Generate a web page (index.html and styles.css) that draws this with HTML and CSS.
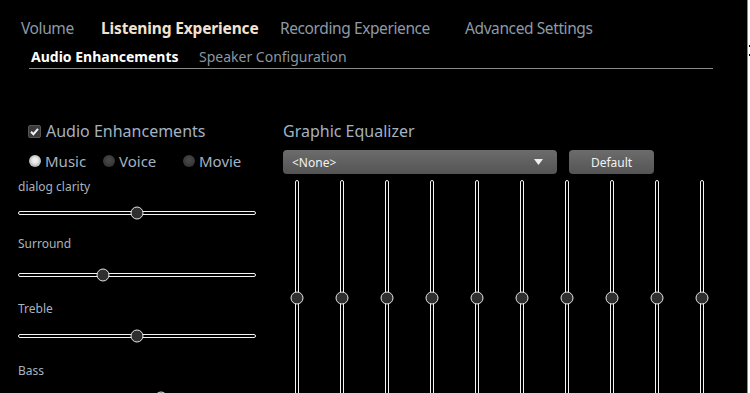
FILE: index.html
```html
<!DOCTYPE html>
<html lang="en">
<head>
    <meta charset="UTF-8">
    <meta name="viewport" content="width=device-width, initial-scale=1.0">
    <title>Listening Experience</title>
    <link rel="stylesheet" href="styles.css">
</head>
<body>
<div class="app">
    <div class="window">
        <nav class="tabs">
            <span class="tab tab-volume">Volume</span>
            <span class="tab tab-listening active">Listening Experience</span>
            <span class="tab tab-recording">Recording Experience</span>
            <span class="tab">Advanced Settings</span>
        </nav>

        <div class="subtabs">
            <span class="subtab active">Audio Enhancements</span>
            <span class="subtab">Speaker Configuration</span>
        </div>

        <main class="panel">
            <section class="enhance">
                <label class="check">
                    <span class="box">
                        <svg width="11" height="11" viewBox="0 0 11 11"><path d="M2 5.8 L4.4 8.2 L9 2.8" fill="none" stroke="#f2f2f2" stroke-width="2"/></svg>
                    </span>
                    Audio Enhancements
                </label>

                <div class="modes">
                    <label class="mode mode-music"><span class="radio selected"></span>Music</label>
                    <label class="mode mode-voice"><span class="radio"></span>Voice</label>
                    <label class="mode"><span class="radio"></span>Movie</label>
                </div>

                <div class="field field-dialog">
                    <div class="field-label">dialog clarity</div>
                    <div class="hslider"><span class="thumb" style="left: 50%"></span></div>
                </div>
                <div class="field field-surround">
                    <div class="field-label">Surround</div>
                    <div class="hslider"><span class="thumb" style="left: 35.7%"></span></div>
                </div>
                <div class="field field-treble">
                    <div class="field-label">Treble</div>
                    <div class="hslider"><span class="thumb" style="left: 50%"></span></div>
                </div>
                <div class="field field-bass">
                    <div class="field-label">Bass</div>
                    <div class="hslider"><span class="thumb" style="left: 60%"></span></div>
                </div>
            </section>

            <section class="eq">
                <h3>Graphic Equalizer</h3>
                <div class="eq-controls">
                    <div class="preset">
                        <span>&lt;None&gt;</span>
                        <svg width="9" height="6" viewBox="0 0 9 6"><path d="M0 0 H9 L4.5 6 Z" fill="#f0f0f0"/></svg>
                    </div>
                    <button class="btn-default">Default</button>
                </div>
                <div class="bands">
                    <div class="vslider"><span class="thumb" style="top: 50%"></span></div>
                    <div class="vslider"><span class="thumb" style="top: 50%"></span></div>
                    <div class="vslider"><span class="thumb" style="top: 50%"></span></div>
                    <div class="vslider"><span class="thumb" style="top: 50%"></span></div>
                    <div class="vslider"><span class="thumb" style="top: 50%"></span></div>
                    <div class="vslider"><span class="thumb" style="top: 50%"></span></div>
                    <div class="vslider"><span class="thumb" style="top: 50%"></span></div>
                    <div class="vslider"><span class="thumb" style="top: 50%"></span></div>
                    <div class="vslider"><span class="thumb" style="top: 50%"></span></div>
                    <div class="vslider"><span class="thumb" style="top: 50%"></span></div>
                </div>
            </section>
        </main>
    </div>
    <div class="edge"><span class="dots"></span></div>
</div>
</body>
</html>
```

FILE: styles.css
```css
body {
    margin: 0;
    padding: 0;
    background: #000;
    font-family: 'Noto Sans', 'Open Sans', sans-serif;
    overflow: hidden;
}

.app {
    display: flex;
    height: 393px;
}

.window {
    flex: 1;
    background: #000;
    overflow: hidden;
}

.edge {
    width: 2px;
    background: #fff;
    border-left: 1px solid #8c8c8c;
    padding-top: 45px;
}

.dots {
    display: block;
    width: 2px;
    height: 11px;
    margin-left: 1px;
    border-top: 2px solid #000;
    border-bottom: 2px solid #000;
    box-sizing: border-box;
}

/* top tabs */
.tabs {
    display: flex;
    padding: 17px 0 0 21px;
    font-size: 15.5px;
    line-height: 22px;
    letter-spacing: -0.4px;
}

.tab {
    color: #8d9aa7;
}

.tab-volume {
    width: 80px;
}

.tab-listening {
    width: 179px;
}

.tab-recording {
    width: 185px;
}

.tab.active {
    color: #f4e2cf;
    font-weight: bold;
    letter-spacing: -0.15px;
}

/* sub tabs */
.subtabs {
    display: flex;
    margin: 9px 0 0 29px;
    width: 682px;
    padding: 0 0 2px 2px;
    border-bottom: 1px solid #8a8a8a;
    font-size: 14px;
    line-height: 18px;
}

.subtab {
    color: #8c96a1;
    width: 168px;
}

.subtab.active {
    color: #fff;
    font-weight: bold;
}

/* panel */
.panel {
    display: flex;
    padding-top: 51px;
}

.enhance {
    width: 238px;
    padding-left: 18px;
}

.check {
    display: flex;
    align-items: center;
    margin-left: 10px;
    font-size: 16px;
    line-height: 22px;
    color: #a4b2c0;
}

.box {
    width: 13px;
    height: 13px;
    margin-right: 5px;
    border: 1px solid #555;
    border-radius: 2px;
    background: #3a3a3a;
    box-sizing: border-box;
    display: flex;
    align-items: center;
    justify-content: center;
}

.modes {
    display: flex;
    margin: 9px 0 0 11px;
    font-size: 15px;
    line-height: 20px;
    color: #a4b2c0;
}

.mode {
    display: flex;
    align-items: center;
}

.mode-music {
    width: 74px;
}

.mode-voice {
    width: 80px;
}

.radio {
    width: 12px;
    height: 12px;
    margin-right: 4px;
    border-radius: 50%;
    background: radial-gradient(circle at 50% 40%, #4a4a4a, #2c2c2c);
}

.radio.selected {
    background: radial-gradient(circle at 50% 45%, #eeeeee 25%, #8a8a8a);
}

.field-label {
    font-size: 12px;
    line-height: 16px;
    color: #a9b3bd;
}

.hslider {
    position: relative;
    height: 4px;
    margin: 0;
    border: 1px solid #f2f2f2;
    border-radius: 3px;
    box-sizing: border-box;
}

.hslider .thumb,
.vslider .thumb {
    position: absolute;
    width: 13px;
    height: 13px;
    border: 1.5px solid #e6e6e6;
    border-radius: 50%;
    background: #2f2f2f;
    box-sizing: border-box;
    transform: translate(-50%, -50%);
}

.hslider .thumb {
    top: 50%;
}

.field-dialog {
    margin-top: 8px;
}

.field-dialog .field-label {
    margin-bottom: 16px;
}

.field-surround {
    margin-top: 21px;
}

.field-surround .field-label {
    margin-bottom: 21px;
}

.field-treble {
    margin-top: 24px;
}

.field-treble .field-label {
    margin-bottom: 17px;
}

.field-bass {
    margin-top: 25px;
}

.field-bass .field-label {
    margin-bottom: 17px;
}

/* equalizer */
.eq {
    margin-left: 27px;
}

.eq h3 {
    margin: 0;
    font-size: 16px;
    line-height: 22px;
    font-weight: normal;
    color: #a4b2c0;
}

.eq-controls {
    display: flex;
    gap: 12px;
    margin-top: 8px;
}

.preset {
    width: 274px;
    height: 24px;
    display: flex;
    align-items: center;
    justify-content: space-between;
    padding: 0 14px 0 9px;
    box-sizing: border-box;
    border-radius: 4px;
    background: linear-gradient(#6c6c6c, #545454);
    color: #f2f2f2;
    font-size: 12px;
}

.btn-default {
    width: 85px;
    height: 24px;
    border: none;
    border-radius: 4px;
    background: linear-gradient(#6c6c6c, #545454);
    color: #f2f2f2;
    font-family: inherit;
    font-size: 12px;
    padding: 0;
}

.bands {
    display: flex;
    gap: 31px;
    margin: 6px 0 0 7px;
}

.vslider {
    position: relative;
    width: 14px;
    height: 236px;
}

.vslider::before {
    content: "";
    position: absolute;
    left: 5px;
    top: 0;
    bottom: 0;
    width: 4px;
    border: 1px solid #f2f2f2;
    border-radius: 3px;
    box-sizing: border-box;
}

.vslider .thumb {
    left: 7px;
}
```
